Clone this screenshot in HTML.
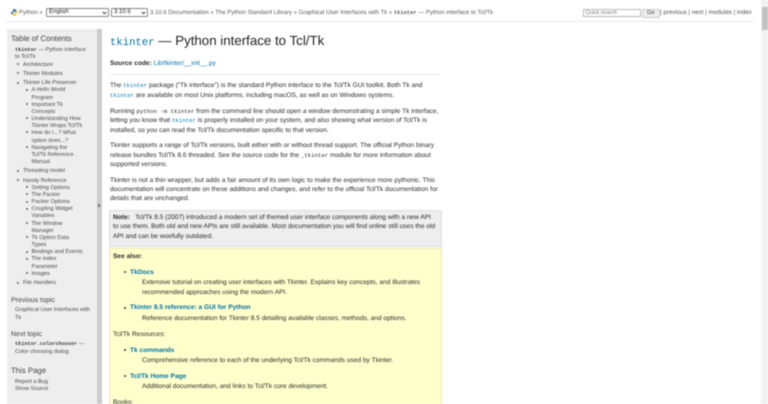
<!DOCTYPE html>
<html lang="en"><head><meta charset="utf-8"><title>tkinter — Python interface to Tcl/Tk</title>
<style>
html,body{margin:0;padding:0;width:768px;height:404px;overflow:hidden;background:#fff}
#p{position:relative;width:768px;height:404px;overflow:hidden;filter:blur(.45px);font-family:"Liberation Sans",sans-serif;font-size:6.6px;color:#222;text-rendering:geometricPrecision}
#p div.t,#p span.t{position:absolute;white-space:nowrap;line-height:10px;height:10px;margin-top:.5px}
code{font-family:"Liberation Mono",monospace;font-size:5.7px}
b code,code.b{font-weight:bold}
a{color:#0072aa;text-decoration:none}
.bx{position:absolute}
.s{color:#4a4a4a;font-size:5.6px}
.s code{font-size:5.2px;color:#3a3a3a}
.h{color:#444;font-size:7.8px}
.p{font-size:7px}
.n{color:#5a5a5a;font-size:6px}
.d{position:absolute;width:2px;height:2px;border-radius:50%;background:#666}
.m{color:#2a2a2a}
.m code{font-size:5.7px}
</style></head><body><div id="p">
<!-- header -->
<svg class="bx" style="left:10.5px;top:9px" width="7" height="7" viewBox="0 0 16 16"><path d="M8 0C5 0 4 1 4 3v2h4v1H2C0 6 0 8 0 9c0 2 1 3 2 3h2v-2c0-2 1-3 3-3h3c1 0 2-1 2-2V3c0-2-2-3-4-3z" fill="#3a76a8"/><path d="M8 16c3 0 4-1 4-3v-2H8v-1h6c2 0 2-2 2-3 0-2-1-3-2-3h-2v2c0 2-1 3-3 3H6c-1 0-2 1-2 2v2c0 2 2 3 4 3z" fill="#f5c93c"/></svg>
<div class="t n" style="left:19px;top:7px">Python »</div>
<div class="bx" style="left:46px;top:8px;width:61px;height:7px;border:.8px solid #888;background:#fff;border-radius:1px;font-size:6px;line-height:7px;color:#222;text-indent:2px">English<svg style="position:absolute;right:1.5px;top:1.5px" width="5" height="4" viewBox="0 0 5 4"><path d="M.7 1L2.5 2.8 4.3 1" fill="none" stroke="#333" stroke-width=".9"/></svg></div>
<div class="bx" style="left:111px;top:8px;width:35px;height:7px;border:.8px solid #888;background:#fff;border-radius:1px;font-size:6px;line-height:7px;color:#222;text-indent:2px">3.10.6<svg style="position:absolute;right:1.5px;top:1.5px" width="5" height="4" viewBox="0 0 5 4"><path d="M.7 1L2.5 2.8 4.3 1" fill="none" stroke="#333" stroke-width=".9"/></svg></div>
<div class="t n" style="left:150px;top:7px">3.10.6 Documentation » The Python Standard Library » Graphical User Interfaces with Tk » <code class="b" style="font-size:5.4px">tkinter</code> — Python interface to Tcl/Tk</div>
<div class="bx" style="left:582.5px;top:8.5px;width:56.5px;height:6.5px;border:.8px solid #bbb;background:#fff;font-size:5.4px;line-height:6.5px;color:#777;text-indent:2px">Quick search</div>
<div class="bx" style="left:642px;top:8.5px;width:15.5px;height:7px;border:.8px solid #ccc;background:#eee;border-radius:1px;font-size:5.6px;line-height:7px;color:#222;text-align:center">Go</div>
<div class="t n" style="left:660px;top:7px;font-size:6.2px;color:#555">| previous | next | modules | index</div>
<div class="bx" style="left:6px;top:21px;width:748px;height:1px;background:#e6e6e6"></div>
<!-- scrollbar -->
<div class="bx" style="left:761px;top:0;width:7px;height:404px;background:#f1f1f1"></div>
<div class="bx" style="left:761.5px;top:7px;width:6px;height:23px;background:#c1c1c1"></div>
<!-- sidebar -->
<div class="bx" style="left:7px;top:29px;width:90px;height:375px;background:#eee"></div>
<div class="bx" style="left:96.5px;top:29px;width:5px;height:375px;background:#ccc"></div>
<div class="bx" style="left:98px;top:204px;width:2px;height:3px;background:#777"></div>
<div class="t h" style="left:11px;top:33px">Table of Contents</div>
<div class="t s" style="left:15px;top:44px"><code class="b">tkinter</code> — Python interface</div>
<div class="t s" style="left:15px;top:51.5px">to Tcl/Tk</div>
<i class="d" style="left:17px;top:63px"></i><div class="t s" style="left:23px;top:59px">Architecture</div>
<i class="d" style="left:17px;top:72px"></i><div class="t s" style="left:23px;top:68px">Tkinter Modules</div>
<i class="d" style="left:17px;top:81.5px"></i><div class="t s" style="left:23px;top:77.5px">Tkinter Life Preserver</div>
<i class="d" style="left:25.5px;top:88.5px"></i><div class="t s" style="left:31.5px;top:84.5px">A Hello World</div>
<div class="t s" style="left:31.5px;top:92px">Program</div>
<i class="d" style="left:25.5px;top:103px"></i><div class="t s" style="left:31.5px;top:99px">Important Tk</div>
<div class="t s" style="left:31.5px;top:106px">Concepts</div>
<i class="d" style="left:25.5px;top:117px"></i><div class="t s" style="left:31.5px;top:113px">Understanding How</div>
<div class="t s" style="left:31.5px;top:120px">Tkinter Wraps Tcl/Tk</div>
<i class="d" style="left:25.5px;top:131px"></i><div class="t s" style="left:31.5px;top:127px">How do I...? What</div>
<div class="t s" style="left:31.5px;top:135px">option does...?</div>
<i class="d" style="left:25.5px;top:146px"></i><div class="t s" style="left:31.5px;top:142px">Navigating the</div>
<div class="t s" style="left:31.5px;top:149px">Tcl/Tk Reference</div>
<div class="t s" style="left:31.5px;top:156px">Manual</div>
<i class="d" style="left:17px;top:169.5px"></i><div class="t s" style="left:23px;top:165.5px">Threading model</div>
<i class="d" style="left:17px;top:179px"></i><div class="t s" style="left:23px;top:175px">Handy Reference</div>
<i class="d" style="left:25.5px;top:186px"></i><div class="t s" style="left:31.5px;top:182px">Setting Options</div>
<i class="d" style="left:25.5px;top:193px"></i><div class="t s" style="left:31.5px;top:189px">The Packer</div>
<i class="d" style="left:25.5px;top:200.5px"></i><div class="t s" style="left:31.5px;top:196.5px">Packer Options</div>
<i class="d" style="left:25.5px;top:207.5px"></i><div class="t s" style="left:31.5px;top:203.5px">Coupling Widget</div>
<div class="t s" style="left:31.5px;top:210.5px">Variables</div>
<i class="d" style="left:25.5px;top:222px"></i><div class="t s" style="left:31.5px;top:218px">The Window</div>
<div class="t s" style="left:31.5px;top:225px">Manager</div>
<i class="d" style="left:25.5px;top:236px"></i><div class="t s" style="left:31.5px;top:232px">Tk Option Data</div>
<div class="t s" style="left:31.5px;top:239px">Types</div>
<i class="d" style="left:25.5px;top:250.5px"></i><div class="t s" style="left:31.5px;top:246.5px">Bindings and Events</div>
<i class="d" style="left:25.5px;top:257.5px"></i><div class="t s" style="left:31.5px;top:253.5px">The Index</div>
<div class="t s" style="left:31.5px;top:261px">Parameter</div>
<i class="d" style="left:25.5px;top:272px"></i><div class="t s" style="left:31.5px;top:268px">Images</div>
<i class="d" style="left:17px;top:281.5px"></i><div class="t s" style="left:23px;top:277.5px">File Handlers</div>
<div class="t h p" style="left:11px;top:295px">Previous topic</div>
<div class="t s" style="left:15px;top:304px">Graphical User Interfaces with</div>
<div class="t s" style="left:15px;top:312px">Tk</div>
<div class="t h p" style="left:11px;top:329.5px">Next topic</div>
<div class="t s" style="left:15px;top:338.5px"><code class="b">tkinter.colorchooser</code> —</div>
<div class="t s" style="left:15px;top:346.5px">Color choosing dialog</div>
<div class="t h" style="left:11px;top:365px">This Page</div>
<div class="t s" style="left:15px;top:376px">Report a Bug</div>
<div class="t s" style="left:15px;top:383.5px">Show Source</div>
<!-- main -->
<div class="t" style="left:110px;top:35px;font-size:13.3px;color:#222"><code style="font-size:10.6px;color:#0072aa">tkinter</code> — Python interface to Tcl/Tk</div>
<div class="t m" style="left:110px;top:58px"><b>Source code:</b> <a href="#">Lib/tkinter/__init__.py</a></div>
<div class="bx" style="left:110px;top:74px;width:330px;height:1px;background:#e4e4e4"></div>
<div class="t m" style="left:110px;top:80.5px">The <a href="#"><code>tkinter</code></a> package (“Tk interface”) is the standard Python interface to the Tcl/Tk GUI toolkit. Both Tk and</div>
<div class="t m" style="left:110px;top:90px"><a href="#"><code>tkinter</code></a> are available on most Unix platforms, including macOS, as well as on Windows systems.</div>
<div class="t m" style="left:110px;top:106px">Running <code>python -m tkinter</code> from the command line should open a window demonstrating a simple Tk interface,</div>
<div class="t m" style="left:110px;top:115.5px">letting you know that <a href="#"><code>tkinter</code></a> is properly installed on your system, and also showing what version of Tcl/Tk is</div>
<div class="t m" style="left:110px;top:125px">installed, so you can read the Tcl/Tk documentation specific to that version.</div>
<div class="t m" style="left:110px;top:140.5px">Tkinter supports a range of Tcl/Tk versions, built either with or without thread support. The official Python binary</div>
<div class="t m" style="left:110px;top:150px">release bundles Tcl/Tk 8.6 threaded. See the source code for the <code>_tkinter</code> module for more information about</div>
<div class="t m" style="left:110px;top:159.5px">supported versions.</div>
<div class="t m" style="left:110px;top:175px">Tkinter is not a thin wrapper, but adds a fair amount of its own logic to make the experience more pythonic. This</div>
<div class="t m" style="left:110px;top:184.5px">documentation will concentrate on these additions and changes, and refer to the official Tcl/Tk documentation for</div>
<div class="t m" style="left:110px;top:193.5px">details that are unchanged.</div>
<div class="bx" style="left:109px;top:210px;width:330.5px;height:34.5px;background:#eee;border:.5px solid #ddd;border-radius:1px"></div>
<div class="t m" style="left:113px;top:212px"><b>Note:</b>&nbsp;&nbsp; Tcl/Tk 8.5 (2007) introduced a modern set of themed user interface components along with a new API</div>
<div class="t m" style="left:113px;top:221.5px">to use them. Both old and new APIs are still available. Most documentation you will find online still uses the old</div>
<div class="t m" style="left:113px;top:231px">API and can be woefully outdated.</div>
<div class="bx" style="left:109px;top:248px;width:330.5px;height:170px;background:#ffc;border:.5px solid #e8e8b0;border-radius:1px"></div>
<div class="t m" style="left:113px;top:251px"><b>See also:</b></div>
<i class="d" style="left:123.5px;top:271px;background:#333"></i><div class="t" style="left:130px;top:267px"><a href="#"><b>TkDocs</b></a></div>
<div class="t m" style="left:142px;top:277.7px">Extensive tutorial on creating user interfaces with Tkinter. Explains key concepts, and illustrates</div>
<div class="t m" style="left:142px;top:287px">recommended approaches using the modern API.</div>
<i class="d" style="left:123.5px;top:306.5px;background:#333"></i><div class="t" style="left:130px;top:302.3px"><a href="#"><b>Tkinter 8.5 reference: a GUI for Python</b></a></div>
<div class="t m" style="left:142px;top:313px">Reference documentation for Tkinter 8.5 detailing available classes, methods, and options.</div>
<div class="t m" style="left:113px;top:329px">Tcl/Tk Resources:</div>
<i class="d" style="left:123.5px;top:349px;background:#333"></i><div class="t" style="left:130px;top:345px"><a href="#"><b>Tk commands</b></a></div>
<div class="t m" style="left:142px;top:355.5px">Comprehensive reference to each of the underlying Tcl/Tk commands used by Tkinter.</div>
<i class="d" style="left:123.5px;top:375px;background:#333"></i><div class="t" style="left:130px;top:371px"><a href="#"><b>Tcl/Tk Home Page</b></a></div>
<div class="t m" style="left:142px;top:381.5px">Additional documentation, and links to Tcl/Tk core development.</div>
<div class="t m" style="left:113px;top:397px">Books:</div>
</div></body></html>
